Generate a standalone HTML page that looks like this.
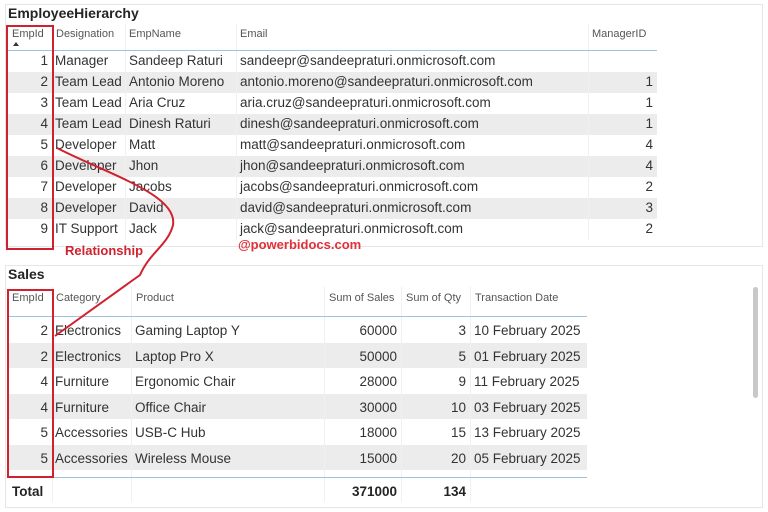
<!DOCTYPE html>
<html><head><style>
body{margin:0;width:768px;height:512px;background:#fff;position:relative;overflow:hidden;font-family:"Liberation Sans",sans-serif;color:#333}
.p{position:absolute;border:1px solid #e6e6e6;background:#fff}
.t{position:absolute;font-weight:bold;font-size:14px;color:#252423}
.c{position:absolute;white-space:nowrap;font-size:13.5px;color:#333}
.h{position:absolute;white-space:nowrap;font-size:11px;color:#555}
.r{text-align:right}
.g{position:absolute;background:#ececec}
.v{position:absolute;width:1px;background:#f0f0f0}
</style></head><body>
<div class="p" style="left:5px;top:4px;width:756px;height:241px"></div>
<div class="t" style="left:8px;top:5px">EmployeeHierarchy</div>
<div class="g" style="left:7px;top:72px;width:650px;height:21px"></div>
<div class="g" style="left:7px;top:114px;width:650px;height:21px"></div>
<div class="g" style="left:7px;top:156px;width:650px;height:21px"></div>
<div class="g" style="left:7px;top:198px;width:650px;height:21px"></div>
<div class="v" style="left:52px;top:24px;height:216px"></div>
<div class="v" style="left:125px;top:24px;height:216px"></div>
<div class="v" style="left:236px;top:24px;height:216px"></div>
<div class="v" style="left:588px;top:24px;height:216px"></div>
<div style="position:absolute;left:7px;top:50px;width:650px;height:1px;background:#9cc3e0"></div>
<div class="h" style="left:12px;top:28px">EmpId</div>
<div style="position:absolute;left:13px;top:42px;width:0;height:0;border-left:3px solid transparent;border-right:3px solid transparent;border-bottom:4px solid #333"></div>
<div class="h" style="left:56px;top:28px">Designation</div>
<div class="h" style="left:129px;top:28px">EmpName</div>
<div class="h" style="left:240px;top:28px">Email</div>
<div class="h" style="left:592px;top:28px">ManagerID</div>
<div id="top"></div>
<div class="p" style="left:5px;top:265px;width:756px;height:241px"></div>
<div class="t" style="left:8px;top:266px">Sales</div>
<div class="g" style="left:7px;top:343px;width:580px;height:25px"></div>
<div class="g" style="left:7px;top:394px;width:580px;height:25px"></div>
<div class="g" style="left:7px;top:445px;width:580px;height:25px"></div>
<div class="v" style="left:52px;top:287px;height:215px"></div>
<div class="v" style="left:131px;top:287px;height:215px"></div>
<div class="v" style="left:324px;top:287px;height:215px"></div>
<div class="v" style="left:401px;top:287px;height:215px"></div>
<div class="v" style="left:470px;top:287px;height:215px"></div>
<div style="position:absolute;left:7px;top:316px;width:580px;height:1px;background:#9cc3e0"></div>
<div style="position:absolute;left:7px;top:477px;width:580px;height:1px;background:#9cc3e0"></div>
<div class="h" style="left:12px;top:292px">EmpId</div>
<div class="h" style="left:56px;top:292px">Category</div>
<div class="h" style="left:136px;top:292px">Product</div>
<div class="h" style="left:329px;top:292px">Sum of Sales</div>
<div class="h" style="left:406px;top:292px">Sum of Qty</div>
<div class="h" style="left:475px;top:292px">Transaction Date</div>
<div style="position:absolute;left:753px;top:287px;width:5px;height:111px;background:#c8c8c8;border-radius:3px"></div>
<div id="bot"></div>
<div class="c" style="left:12px;top:484px;font-weight:bold;color:#252423">Total</div>
<div class="c r" style="left:325px;width:72px;top:484px;font-weight:bold;color:#252423">371000</div>
<div class="c r" style="left:402px;width:64px;top:484px;font-weight:bold;color:#252423">134</div>
<div style="position:absolute;left:6px;top:25px;width:44px;height:221px;border:2px solid #d0212f"></div>
<div style="position:absolute;left:7px;top:289px;width:43px;height:185px;border:2px solid #d0212f"></div>
<svg style="position:absolute;left:0;top:0" width="768" height="512"><path d="M57,148 C110,175 178,195 173,225 C168,245 150,252 140,275 L55,336" fill="none" stroke="#d0212f" stroke-width="2"/></svg>
<div class="c" style="left:65px;top:243px;color:#d0212f;font-weight:bold;font-size:13px">Relationship</div>
<div class="c" style="left:238px;top:237px;color:#e0303a;font-weight:bold;font-size:13px">@powerbidocs.com</div>
<script>
var T=[["1","Manager","Sandeep Raturi","sandeepr@sandeepraturi.onmicrosoft.com",""],["2","Team Lead","Antonio Moreno","antonio.moreno@sandeepraturi.onmicrosoft.com","1"],["3","Team Lead","Aria Cruz","aria.cruz@sandeepraturi.onmicrosoft.com","1"],["4","Team Lead","Dinesh Raturi","dinesh@sandeepraturi.onmicrosoft.com","1"],["5","Developer","Matt","matt@sandeepraturi.onmicrosoft.com","4"],["6","Developer","Jhon","jhon@sandeepraturi.onmicrosoft.com","4"],["7","Developer","Jacobs","jacobs@sandeepraturi.onmicrosoft.com","2"],["8","Developer","David","david@sandeepraturi.onmicrosoft.com","3"],["9","IT Support","Jack","jack@sandeepraturi.onmicrosoft.com","2"]];
var h="";T.forEach(function(r,i){var y=53+i*21;
h+='<div class="c r" style="left:7px;width:41px;top:'+y+'px">'+r[0]+'</div><div class="c" style="left:55px;top:'+y+'px">'+r[1]+'</div><div class="c" style="left:129px;top:'+y+'px">'+r[2]+'</div><div class="c" style="left:240px;top:'+y+'px">'+r[3]+'</div><div class="c r" style="left:589px;width:64px;top:'+y+'px">'+r[4]+'</div>';});
document.getElementById("top").outerHTML=h;
var B=[["2","Electronics","Gaming Laptop Y","60000","3","10 February 2025"],["2","Electronics","Laptop Pro X","50000","5","01 February 2025"],["4","Furniture","Ergonomic Chair","28000","9","11 February 2025"],["4","Furniture","Office Chair","30000","10","03 February 2025"],["5","Accessories","USB-C Hub","18000","15","13 February 2025"],["5","Accessories","Wireless Mouse","15000","20","05 February 2025"]];
h="";B.forEach(function(r,i){var y=323+i*25.5;
h+='<div class="c r" style="left:7px;width:41px;top:'+y+'px">'+r[0]+'</div><div class="c" style="left:55px;top:'+y+'px">'+r[1]+'</div><div class="c" style="left:135px;top:'+y+'px">'+r[2]+'</div><div class="c r" style="left:325px;width:72px;top:'+y+'px">'+r[3]+'</div><div class="c r" style="left:402px;width:64px;top:'+y+'px">'+r[4]+'</div><div class="c" style="left:474px;top:'+y+'px">'+r[5]+'</div>';});
document.getElementById("bot").outerHTML=h;
</script>
</body></html>
